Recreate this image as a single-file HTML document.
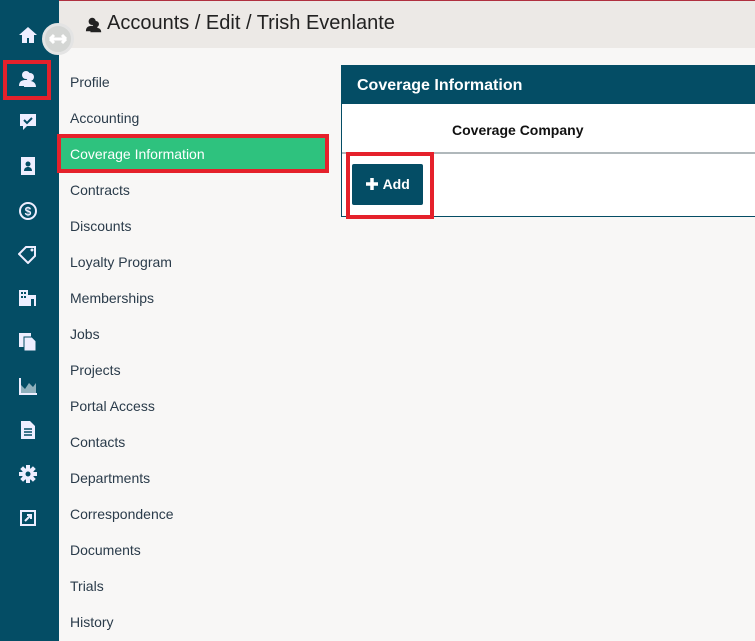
<!DOCTYPE html>
<html><head><style>
*{margin:0;padding:0;box-sizing:border-box}
body{width:755px;height:641px;overflow:hidden;background:#f8f7f6;font-family:"Liberation Sans",sans-serif;position:relative}
#side{position:absolute;left:0;top:0;width:59px;height:641px;background:#044d65}
#top{position:absolute;left:0;top:0;width:755px;height:1px;background:#b03040}
#hdr{position:absolute;left:59px;top:1px;width:696px;height:47px;background:#ece9e6}
#hdr span{position:absolute;left:48px;top:11px;font-size:20px;color:#222}
.ic{position:absolute;left:18px;width:20px;height:20px}
.nav{position:absolute;left:70px;font-size:14px;color:#2a3b4a}
#sel{position:absolute;left:61px;top:138px;width:264px;height:31px;background:#2ec27e;outline:4px solid #e5212b}
#panel{position:absolute;left:341px;top:65px;width:420px;height:152px;background:#fff;border:1px solid #044d65}
#ph{height:38px;background:#044d65;color:#fff;font-weight:bold;font-size:16px;padding:11px 15px}
#col{position:absolute;left:110px;top:56px;font-size:14px;font-weight:bold;color:#111}
#line{position:absolute;left:0;top:86px;width:100%;height:2px;background:#b0b8bb}
#add{position:absolute;left:352px;top:164px;width:71px;height:41px;background:#044d65;border-radius:2px;color:#fff;font-weight:bold;font-size:14px;line-height:41px;text-align:center}
.rb{position:absolute;border:4px solid #e5212b}
#tog{position:absolute;left:42px;top:23px;width:32px;height:32px;border-radius:50%;background:#d4d6d4;border:3px solid #e4e4e4}
</style></head><body>
<div id="top"></div>
<div id="side">
<svg class="ic" style="top:25px" viewBox="0 0 20 20"><path d="M10 2L1 10h3v8h5v-5h2v5h5v-8h3z" fill="#eef"/></svg>
<svg class="ic" style="top:69px" viewBox="0 0 20 20"><circle cx="8" cy="6" r="4" fill="#eef"/><path d="M1 17c0-5 3-6 7-6s7 1 7 6z" fill="#eef"/><circle cx="12" cy="8" r="4" fill="#eef"/><path d="M6 18c0-4 3-6 6-6s6 2 6 6z" fill="#eef"/></svg>
<svg class="ic" style="top:112px" viewBox="0 0 20 20"><path d="M2 2h16v12h-9l-4 4v-4h-3z" fill="#eef"/><path d="M6 8l3 3 5-5" stroke="#044d65" stroke-width="2" fill="none"/></svg>
<svg class="ic" style="top:156px" viewBox="0 0 20 20"><rect x="3" y="1" width="14" height="18" fill="#eef"/><circle cx="10" cy="8" r="2.5" fill="#044d65"/><path d="M6 15c0-3 2-4 4-4s4 1 4 4z" fill="#044d65"/></svg>
<svg class="ic" style="top:201px" viewBox="0 0 20 20"><circle cx="10" cy="10" r="8" stroke="#eef" stroke-width="2" fill="none"/><text x="10" y="14.5" font-size="12" font-weight="bold" fill="#eef" text-anchor="middle" font-family="Liberation Sans">$</text></svg>
<svg class="ic" style="top:244px" viewBox="0 0 20 20"><path d="M8 3h9v9l-7 7-9-9z" stroke="#eef" stroke-width="2" fill="none" transform="rotate(0)"/><circle cx="14" cy="6" r="1.5" fill="#eef"/></svg>
<svg class="ic" style="top:288px" viewBox="0 0 20 20"><rect x="1" y="2" width="9" height="16" fill="#eef"/><rect x="10" y="7" width="8" height="11" fill="#eef"/><rect x="13" y="11" width="3" height="7" fill="#044d65"/><rect x="3" y="4" width="2" height="2" fill="#044d65"/><rect x="6" y="4" width="2" height="2" fill="#044d65"/><rect x="3" y="8" width="2" height="2" fill="#044d65"/><rect x="6" y="8" width="2" height="2" fill="#044d65"/></svg>
<svg class="ic" style="top:332px" viewBox="0 0 20 20"><rect x="1" y="1" width="12" height="14" fill="#eef"/><path d="M6 5h8l4 4v10h-12z" fill="#eef" stroke="#044d65" stroke-width="1"/></svg>
<svg class="ic" style="top:376px" viewBox="0 0 20 20"><path d="M2 2v16h17" stroke="#eef" stroke-width="2" fill="none"/><path d="M3 17v-8l4 4 4-6 4 4 3-4v10z" fill="#8fb0bc"/></svg>
<svg class="ic" style="top:420px" viewBox="0 0 20 20"><path d="M3 1h9l5 5v13h-14z" fill="#eef"/><path d="M6 9h8M6 12h8M6 15h8" stroke="#044d65" stroke-width="1.5"/></svg>
<svg class="ic" style="top:464px" viewBox="0 0 20 20"><g fill="#eef"><circle cx="10" cy="10" r="6"/><rect x="8" y="1" width="4" height="18"/><rect x="1" y="8" width="18" height="4"/><rect x="8" y="1" width="4" height="18" transform="rotate(45 10 10)"/><rect x="8" y="1" width="4" height="18" transform="rotate(-45 10 10)"/></g><circle cx="10" cy="10" r="2.5" fill="#044d65"/></svg>
<svg class="ic" style="top:508px" viewBox="0 0 20 20"><rect x="2" y="2" width="16" height="16" fill="#eef"/><rect x="4" y="4" width="12" height="12" fill="#044d65"/><path d="M7 13l6-6M9 7h4v4" stroke="#eef" stroke-width="2" fill="none"/></svg>
</div>
<div class="rb" style="left:3px;top:60px;width:48px;height:40px"></div>
<div id="hdr"><span>Accounts / Edit / Trish Evenlante</span><svg style="position:absolute;left:26px;top:15px" width="18" height="18" viewBox="0 0 20 20"><circle cx="8" cy="6" r="4" fill="#222"/><path d="M1 17c0-5 3-6 7-6s7 1 7 6z" fill="#222"/><circle cx="12" cy="9" r="3.5" fill="#222"/><path d="M6 18c0-4 3-5 6-5s6 1 6 5z" fill="#222"/></svg></div>
<div id="tog"><svg width="26" height="26" viewBox="0 0 26 26"><path d="M5 13h16M5 13l4-4M5 13l4 4M21 13l-4-4M21 13l-4 4" stroke="#fff" stroke-width="3" fill="none"/></svg></div>
<div id="sel"></div>
<div class="nav" style="top:74px">Profile</div>
<div class="nav" style="top:110px">Accounting</div>
<div class="nav" style="top:146px;color:#fff">Coverage Information</div>
<div class="nav" style="top:182px">Contracts</div>
<div class="nav" style="top:218px">Discounts</div>
<div class="nav" style="top:254px">Loyalty Program</div>
<div class="nav" style="top:290px">Memberships</div>
<div class="nav" style="top:326px">Jobs</div>
<div class="nav" style="top:362px">Projects</div>
<div class="nav" style="top:398px">Portal Access</div>
<div class="nav" style="top:434px">Contacts</div>
<div class="nav" style="top:470px">Departments</div>
<div class="nav" style="top:506px">Correspondence</div>
<div class="nav" style="top:542px">Documents</div>
<div class="nav" style="top:578px">Trials</div>
<div class="nav" style="top:614px">History</div>
<div id="panel"><div id="ph">Coverage Information</div><div id="col">Coverage Company</div><div id="line"></div></div>
<div id="add"><svg width="14" height="14" viewBox="0 0 14 14" style="vertical-align:-2px"><path d="M7 1v12M1 7h12" stroke="#fff" stroke-width="3.5"/></svg> Add</div>
<div class="rb" style="left:346px;top:152px;width:88px;height:67px"></div>
</body></html>
